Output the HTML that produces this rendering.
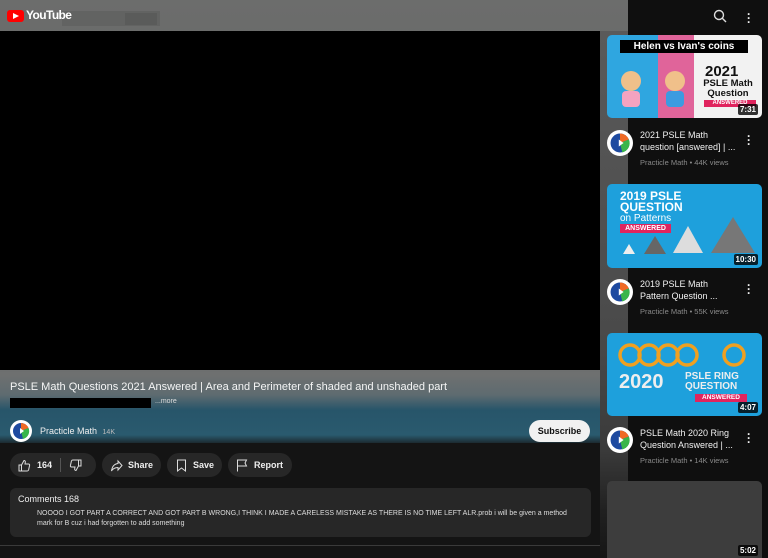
<!DOCTYPE html>
<html><head><meta charset="utf-8"><style>
*{margin:0;padding:0;box-sizing:border-box}
html,body{width:768px;height:558px;overflow:hidden}
body{background:#0f0f0f;font-family:"Liberation Sans",sans-serif;position:relative;color:#fff}
.abs{position:absolute}
.btn{position:absolute;top:453px;height:24px;background:#272727;border-radius:12px;font-size:9px;font-weight:bold;display:flex;align-items:center;color:#eee}
.thumb{position:absolute;left:607px;width:155px;border-radius:5px;overflow:hidden}
.dur{position:absolute;right:4px;bottom:3px;background:rgba(0,0,0,.8);font-size:8px;padding:1px 2px;border-radius:2px;font-weight:bold}
.av{position:absolute;left:607px;width:26px;height:26px;border-radius:50%;background:#fff;overflow:hidden}
.t{position:absolute;left:640px;font-size:9px;line-height:11.5px;color:#f1f1f1;width:96px}
.m{position:absolute;left:640px;font-size:7.5px;color:#8a8a8a}
.dots{position:absolute;left:747px;font-size:12px;font-weight:bold;color:#eee;line-height:4px;width:4px;text-align:center}
</style></head><body>
<div class="abs" style="left:0;top:0;width:628px;height:443px;background:linear-gradient(#6c6d6c 0,#5e5f5f 300px,#6e7070 375px,#5e6b70 395px,#27556a 410px,#2a5a6e 435px,#1c2a30 443px)"></div>
<div class="abs" style="left:600px;top:31px;width:28px;height:527px;background:linear-gradient(#5a5a5a,#4a4a4a 300px,#3a3a3a 420px,#202020 480px,#161616)"></div>
<div class="abs" style="left:0;top:443px;width:600px;height:115px;background:#141414"></div>
<div class="abs" style="left:628px;top:0;width:140px;height:558px;background:#0f0f0f"></div>
<div class="abs" style="left:62px;top:11px;width:98px;height:15px;background:#626362"></div>
<div class="abs" style="left:125px;top:13px;width:32px;height:12px;background:#5a5b5a"></div>
<div class="abs" style="left:7px;top:10px;width:17px;height:12px;background:#f00;border-radius:3px"></div>
<div class="abs" style="left:13px;top:13px;width:0;height:0;border-left:6px solid #fff;border-top:3px solid transparent;border-bottom:3px solid transparent"></div>
<div class="abs" style="left:26px;top:8px;font-size:12px;font-weight:bold;letter-spacing:-.6px">YouTube</div>
<svg class="abs" style="left:713px;top:9px" width="14" height="14" viewBox="0 0 14 14"><circle cx="6" cy="6" r="4.5" fill="none" stroke="#ddd" stroke-width="1.4"/><path d="M9.3 9.3L13 13" stroke="#ddd" stroke-width="1.4"/></svg>
<div class="dots" style="top:12px">·<br>·<br>·</div>
<div class="abs" style="left:0;top:31px;width:600px;height:339px;background:#000"></div>
<div class="abs" style="left:10px;top:381px;font-size:11px;color:#f5f5f5">PSLE Math Questions 2021 Answered | Area and Perimeter of shaded and unshaded part</div>
<div class="abs" style="left:10px;top:398px;width:141px;height:10px;background:#000"></div>
<div class="abs" style="left:155px;top:398px;font-size:7px;color:#ddd">...more</div>
<div class="abs" style="left:10px;top:420px;width:22px;height:22px;border-radius:50%;background:#fff;overflow:hidden"><svg width="22" height="22" viewBox="0 0 22 22"><circle cx="11" cy="11" r="8" fill="#1e4aa0"/><path d="M11 11L11 3A8 8 0 0 1 18.5 8z" fill="#f06a25"/><path d="M11 11L18.5 8A8 8 0 0 1 13 19z" fill="#39b54a"/><path d="M10 8l4 3-4 3z" fill="#fff"/></svg></div>
<div class="abs" style="left:40px;top:426px;font-size:9px;color:#eee">Practicle Math <span style="font-size:7px;color:#bbb;margin-left:3px">14K</span></div>
<div class="abs" style="left:529px;top:420px;width:61px;height:22px;border-radius:11px;background:#f1f1f1;color:#0f0f0f;font-size:9px;font-weight:bold;text-align:center;line-height:22px">Subscribe</div>
<div class="btn" style="left:10px;width:86px;padding-left:8px"><svg width="13" height="13" viewBox="0 0 13 13" fill="none" stroke="#ddd"><path d="M1 6h2.5v6H1zM3.5 6L6 1.5c1 0 1.5.7 1.3 1.8L7 5h3.5c.8 0 1.3.7 1.1 1.4l-1 4.5c-.2.6-.6 1.1-1.3 1.1H3.5"/></svg><span style="margin-left:6px">164</span><span style="margin-left:8px;width:1px;height:14px;background:#555"></span><svg style="margin-left:8px" width="13" height="13" viewBox="0 0 13 13" fill="none" stroke="#ddd"><path d="M12 7h-2.5V1H12zM9.5 7L7 11.5c-1 0-1.5-.7-1.3-1.8L6 8H2.5c-.8 0-1.3-.7-1.1-1.4l1-4.5C2.6 1.5 3 1 3.700 1h5.8"/></svg></div>
<div class="btn" style="left:102px;width:59px;padding-left:8px"><svg width="13" height="13" viewBox="0 0 13 13" fill="none" stroke="#ddd"><path d="M8 2l4 4.5L8 11V8.5C5 8.5 3 9.5 1.5 12 2 8 4 5 8 4.5z"/></svg><span style="margin-left:5px">Share</span></div>
<div class="btn" style="left:167px;width:55px;padding-left:9px"><svg width="11" height="13" viewBox="0 0 11 13" fill="none" stroke="#ddd"><path d="M1.5 1h8v11L5.5 9 1.5 12z"/></svg><span style="margin-left:6px">Save</span></div>
<div class="btn" style="left:228px;width:64px;padding-left:8px"><svg width="12" height="13" viewBox="0 0 12 13" fill="none" stroke="#ddd"><path d="M1.5 12.5V1h9l-1.5 3 1.5 3h-9"/></svg><span style="margin-left:6px">Report</span></div>
<div class="abs" style="left:10px;top:488px;width:581px;height:49px;background:#272727;border-radius:6px"></div>
<div class="abs" style="left:18px;top:494px;font-size:9px;color:#eee">Comments 168</div>
<div class="abs" style="left:37px;top:509px;font-size:7px;line-height:10px;color:#ddd;width:540px">NOOOO I GOT PART A CORRECT AND GOT PART B WRONG,I THINK I MADE A CARELESS MISTAKE AS THERE IS NO TIME LEFT ALR.prob i will be given a method mark for B cuz i had forgotten to add something</div>
<div class="abs" style="left:0;top:545px;width:600px;height:1px;background:#3a3a3a"></div>

<div class="thumb" style="top:35px;height:83px;background:linear-gradient(90deg,#2fa6e0 0,#2fa6e0 33%,#e0649a 33%,#e0649a 56%,#f2f2f2 56%)">
<div class="abs" style="left:13px;top:5px;width:128px;height:13px;background:#000;color:#fff;font-size:10px;font-weight:bold;text-align:center;line-height:13px">Helen vs Ivan's coins</div>
<div class="abs" style="left:14px;top:36px;width:20px;height:20px;border-radius:50%;background:#f0c08a"></div>
<div class="abs" style="left:15px;top:56px;width:18px;height:16px;border-radius:4px;background:#f4a3c0"></div>
<div class="abs" style="left:58px;top:36px;width:20px;height:20px;border-radius:50%;background:#f0c08a"></div>
<div class="abs" style="left:59px;top:56px;width:18px;height:16px;border-radius:4px;background:#3c9be0"></div>
<div class="abs" style="left:98px;top:28px;font-size:15px;font-weight:900;color:#111">2021</div>
<div class="abs" style="left:92px;top:44px;font-size:9.5px;font-weight:bold;color:#111;line-height:10px;text-align:center;width:58px">PSLE Math<br>Question</div>
<div class="abs" style="left:97px;top:65px;width:52px;height:7px;background:#e0245e;font-size:6px;font-weight:bold;text-align:center;line-height:7px">ANSWERED</div>
<div class="dur">7:31</div></div>
<div class="av" style="top:130px"><svg width="26" height="26" viewBox="0 0 22 22"><circle cx="11" cy="11" r="8" fill="#1e4aa0"/><path d="M11 11L11 3A8 8 0 0 1 18.5 8z" fill="#f06a25"/><path d="M11 11L18.5 8A8 8 0 0 1 13 19z" fill="#39b54a"/><path d="M10 8l4 3-4 3z" fill="#fff"/></svg></div>
<div class="t" style="top:130px">2021 PSLE Math question [answered] | ...</div>
<div class="m" style="top:158px">Practicle Math • 44K views</div>
<div class="dots" style="top:134px">·<br>·<br>·</div>

<div class="thumb" style="top:184px;height:84px;background:#1ea0dc">
<div class="abs" style="left:13px;top:7px;font-size:12px;font-weight:900;line-height:11px">2019 PSLE<br>QUESTION</div>
<div class="abs" style="left:13px;top:29px;font-size:10px;color:#fff">on Patterns</div>
<div class="abs" style="left:13px;top:40px;width:51px;height:9px;background:#e0245e;font-size:7px;font-weight:bold;text-align:center;line-height:9px">ANSWERED</div>
<div class="abs" style="left:16px;top:60px;border-left:6px solid transparent;border-right:6px solid transparent;border-bottom:10px solid #eee"></div>
<div class="abs" style="left:37px;top:52px;border-left:11px solid transparent;border-right:11px solid transparent;border-bottom:18px solid #666"></div>
<div class="abs" style="left:66px;top:42px;border-left:15px solid transparent;border-right:15px solid transparent;border-bottom:27px solid #ddd"></div>
<div class="abs" style="left:104px;top:33px;border-left:22px solid transparent;border-right:22px solid transparent;border-bottom:36px solid #777"></div>
<div class="dur">10:30</div></div>
<div class="av" style="top:279px"><svg width="26" height="26" viewBox="0 0 22 22"><circle cx="11" cy="11" r="8" fill="#1e4aa0"/><path d="M11 11L11 3A8 8 0 0 1 18.5 8z" fill="#f06a25"/><path d="M11 11L18.5 8A8 8 0 0 1 13 19z" fill="#39b54a"/><path d="M10 8l4 3-4 3z" fill="#fff"/></svg></div>
<div class="t" style="top:279px">2019 PSLE Math<br>Pattern Question ...</div>
<div class="m" style="top:307px">Practicle Math • 55K views</div>
<div class="dots" style="top:283px">·<br>·<br>·</div>

<div class="thumb" style="top:333px;height:83px;background:#1ea0dc">
<svg class="abs" style="left:10px;top:8px" width="135" height="30"><g fill="none" stroke="#f0a020" stroke-width="3.5"><circle cx="13" cy="14" r="10"/><circle cx="32" cy="14" r="10"/><circle cx="51" cy="14" r="10"/><circle cx="70" cy="14" r="10"/><circle cx="117" cy="14" r="10"/></g></svg>
<div class="abs" style="left:12px;top:38px;font-size:20px;font-weight:900;color:#eee">2020</div>
<div class="abs" style="left:78px;top:39px;font-size:10px;font-weight:900;color:#eee;line-height:10px">PSLE RING<br>QUESTION</div>
<div class="abs" style="left:88px;top:61px;width:52px;height:8px;background:#e0245e;font-size:6.5px;font-weight:bold;text-align:center;line-height:8px">ANSWERED</div>
<div class="dur">4:07</div></div>
<div class="av" style="top:427px"><svg width="26" height="26" viewBox="0 0 22 22"><circle cx="11" cy="11" r="8" fill="#1e4aa0"/><path d="M11 11L11 3A8 8 0 0 1 18.5 8z" fill="#f06a25"/><path d="M11 11L18.5 8A8 8 0 0 1 13 19z" fill="#39b54a"/><path d="M10 8l4 3-4 3z" fill="#fff"/></svg></div>
<div class="t" style="top:428px">PSLE Math 2020 Ring Question Answered | ...</div>
<div class="m" style="top:456px">Practicle Math • 14K views</div>
<div class="dots" style="top:432px">·<br>·<br>·</div>

<div class="thumb" style="top:481px;height:85px;background:#3d3d3d"><div class="dur" style="bottom:10px">5:02</div></div>
</body></html>
